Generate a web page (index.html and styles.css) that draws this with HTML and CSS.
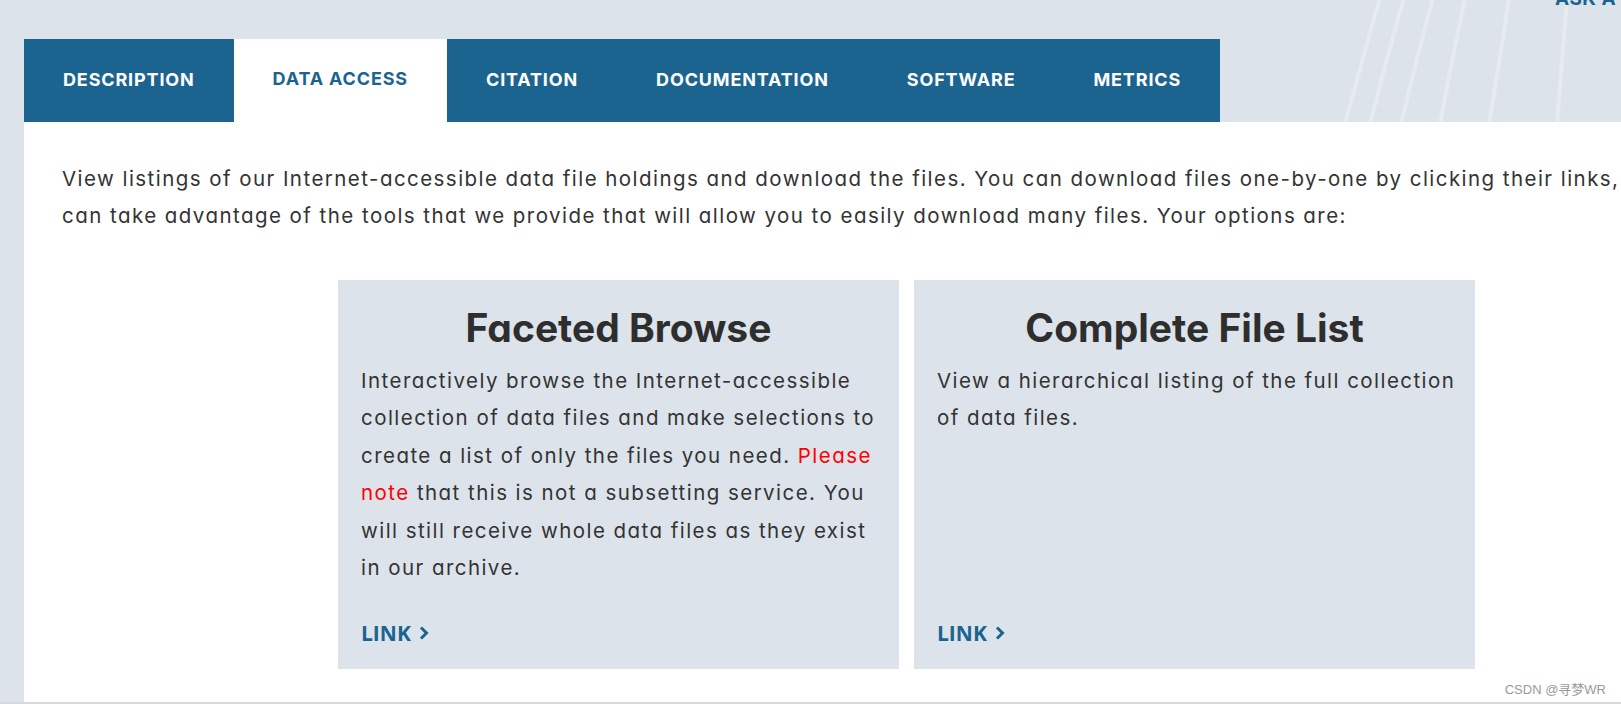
FILE: index.html
```html
<!DOCTYPE html>
<html lang="en">
<head>
<meta charset="utf-8">
<title>Data Access</title>
<link rel="stylesheet" href="styles.css">
</head>
<body>
<div class="page">
  <svg class="deco" width="321" height="122" viewBox="0 0 321 122" aria-hidden="true">
    <path d="M80 -2 Q62 60 45 124" />
    <path d="M104 -2 Q86 60 70 124" />
    <path d="M133 -2 Q116 60 101 124" />
    <path d="M165 -2 Q152 60 140 124" />
    <path d="M209 -2 Q200 60 189 124" />
    <path d="M267 -2 Q262 60 257 124" />
  </svg>
  <div class="ask">ASK A LIBRARIAN</div>

  <nav class="tabs">
    <a class="tab">Description</a>
    <a class="tab active">Data Access</a>
    <a class="tab">Citation</a>
    <a class="tab">Documentation</a>
    <a class="tab">Software</a>
    <a class="tab">Metrics</a>
  </nav>

  <main class="panel">
    <p class="intro">View listings of our Internet-accessible data file holdings and download the files. You can download files one-by-one by clicking their links, or you can take advantage of the tools that we provide that will allow you to easily download many files. Your options are:</p>

    <div class="cards">
      <section class="card">
        <h2 class="card-title">Faceted Browse</h2>
        <p class="card-text">Interactively browse the Internet-accessible collection of data files and make selections to create a list of only the files you need. <span class="warn">Please note</span> that this is not a subsetting service. You will still receive whole data files as they exist in our archive.</p>
        <a class="card-link">LINK
          <svg class="chev" width="10" height="16" viewBox="0 0 10 16" aria-hidden="true"><path d="M2 2.5 L7.5 8 L2 13.5" /></svg>
        </a>
      </section>
      <section class="card">
        <h2 class="card-title">Complete File List</h2>
        <p class="card-text">View a hierarchical listing of the full collection of data files.</p>
        <a class="card-link">LINK
          <svg class="chev" width="10" height="16" viewBox="0 0 10 16" aria-hidden="true"><path d="M2 2.5 L7.5 8 L2 13.5" /></svg>
        </a>
      </section>
    </div>
  </main>
  <div class="watermark">CSDN @寻梦WR</div>
</div>
</body>
</html>
```

FILE: styles.css
```css
* { box-sizing: border-box; }

html, body {
  margin: 0;
  padding: 0;
}

body {
  width: 1621px;
  height: 704px;
  overflow: hidden;
  background: #ffffff;
  font-family: Inter, "Noto Sans", sans-serif;
  font-feature-settings: "cv11";
  color: #333333;
}

.page {
  position: relative;
  width: 1621px;
  height: 704px;
  padding: 39px 0 0 24px;
  background: #dce3eb;
  border-bottom: 2px solid #d9d9d9;
  overflow: hidden;
}

.deco {
  position: absolute;
  top: 0;
  left: 1300px;
}

.deco path {
  fill: none;
  stroke: #e7ebf1;
  stroke-width: 4;
}

.ask {
  position: absolute;
  top: -13px;
  left: 1555px;
  font-size: 19px;
  font-weight: 700;
  letter-spacing: 0.5px;
  color: #1c6490;
  white-space: nowrap;
}

.tabs {
  display: flex;
  width: max-content;
  height: 83px;
  background: #1c6490;
  position: relative;
}

.tab {
  display: flex;
  align-items: center;
  padding: 0 39px 2px;
  color: #ffffff;
  font-size: 18px;
  font-weight: 700;
  text-transform: uppercase;
  letter-spacing: 0.85px;
}

.tab.active {
  background: #ffffff;
  color: #1c6490;
  padding-bottom: 4px;
}

.panel {
  width: 1765px;
  height: 580px;
  background: #ffffff;
  padding: 38px 0 0 38px;
}

.intro {
  margin: 0;
  width: 1650px;
  font-size: 20.5px;
  letter-spacing: 1.45px;
  line-height: 37px;
}

.cards {
  display: flex;
  justify-content: center;
  gap: 15px;
  margin-top: 46px;
  padding-right: 38px;
}

.card {
  width: 561px;
  height: 389px;
  background: #dce3eb;
  padding: 25px 23px 22px;
  display: flex;
  flex-direction: column;
}

.card-title {
  margin: 0;
  text-align: center;
  font-size: 39px;
  font-weight: 700;
  line-height: 46px;
  color: #2e2e2e;
}

.card-text {
  margin: 11px -4px 0 0;
  font-size: 20.5px;
  letter-spacing: 1.45px;
  line-height: 37.4px;
}

.warn { color: #ff0000; }

.card-link {
  margin-top: auto;
  display: flex;
  align-items: center;
  gap: 8px;
  font-family: "Open Sans", sans-serif;
  font-size: 21px;
  font-weight: 700;
  color: #1c6490;
  line-height: 28px;
}

.chev path {
  fill: none;
  stroke: #1c6490;
  stroke-width: 3;
}

.watermark {
  position: absolute;
  right: 15px;
  top: 679px;
  font-family: "Liberation Sans", "Noto Sans CJK SC", sans-serif;
  font-size: 13px;
  color: #9a9a9a;
}
```
